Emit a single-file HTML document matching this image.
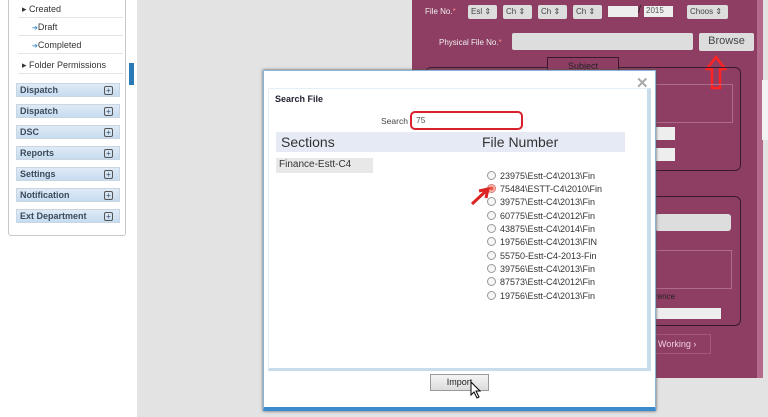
<!DOCTYPE html>
<html><head><style>
*{margin:0;padding:0;box-sizing:border-box}
body{width:768px;height:417px;overflow:hidden;background:#e3e3e3;font-family:"Liberation Sans",sans-serif;position:relative}
.a{position:absolute}
.left{left:0;top:0;width:137px;height:417px;background:#fff}
.side{left:8px;top:-4px;width:118px;height:240px;border:1px solid #c8c8c8;border-radius:3px;background:#fff}
.it{font-size:9px;color:#333;white-space:nowrap}
.hd{left:16px;width:104px;height:14px;background:linear-gradient(#dfeaf6,#c6dcf0);border:1px solid #c9d6e2;font-size:9px;font-weight:bold;color:#3b4b5c;padding:1px 0 0 3px}
.hd i{position:absolute;right:6px;top:2px;width:9px;height:9px;border:1px solid #555;border-radius:2px;font-style:normal;font-size:8px;line-height:7px;text-align:center;font-weight:normal}
.pink{left:412px;top:0;width:346px;height:378px;background:#8f3e63}
.sel{height:14px;background:#ddd;border-radius:2px;font-size:8px;color:#444;padding:2px 3px}
.modal{left:263px;top:70px;width:393px;height:341px;background:#fff;border:1px solid #8cb4d8;border-bottom:4px solid #3a8ccf;box-shadow:0 0 3px #555}
.r{font-size:9px;color:#333;white-space:nowrap;left:487px}
.r b{display:inline-block;width:9px;height:9px;border:1px solid #999;border-radius:50%;margin-right:4px;vertical-align:-1px;background:#f6f6f6}
</style></head><body>
<div class="a left"></div>
<div class="a side"></div>
<div class="a it" style="left:22px;top:4px">▸ Created</div>
<div class="a" style="left:18px;top:17px;width:105px;border-top:1px solid #e4e4e4"></div>
<div class="a it" style="left:32px;top:22px"><span style="color:#38c;font-size:7px">➔</span>Draft</div>
<div class="a" style="left:18px;top:35px;width:105px;border-top:1px solid #e4e4e4"></div>
<div class="a it" style="left:32px;top:40px"><span style="color:#38c;font-size:7px">➔</span>Completed</div>
<div class="a" style="left:18px;top:53px;width:105px;border-top:1px solid #e4e4e4"></div>
<div class="a it" style="left:22px;top:60px">▸ Folder Permissions</div>
<div class="a" style="left:18px;top:73px;width:105px;border-top:1px solid #e4e4e4"></div>
<div class="a" style="left:129px;top:63px;width:5px;height:22px;background:#2a7ab8"></div>
<div class="a hd" style="top:83px">Dispatch<i>+</i></div>
<div class="a hd" style="top:104px">Dispatch<i>+</i></div>
<div class="a hd" style="top:125px">DSC<i>+</i></div>
<div class="a hd" style="top:146px">Reports<i>+</i></div>
<div class="a hd" style="top:167px">Settings<i>+</i></div>
<div class="a hd" style="top:188px">Notification<i>+</i></div>
<div class="a hd" style="top:209px">Ext Department<i>+</i></div>

<div class="a pink"></div>
<div class="a" style="left:757px;top:0;width:6px;height:378px;background:#b36a8b"></div>
<div class="a" style="left:762px;top:80px;width:6px;height:60px;background:#f2f2f2"></div>
<div class="a it" style="left:425px;top:7px;color:#eee;font-size:8px">File No.<span style="color:#f88">*</span></div>
<div class="a sel" style="left:468px;top:5px;width:29px">Esl ⇕</div>
<div class="a sel" style="left:503px;top:5px;width:29px">Ch ⇕</div>
<div class="a sel" style="left:538px;top:5px;width:29px">Ch ⇕</div>
<div class="a sel" style="left:573px;top:5px;width:29px">Ch ⇕</div>
<div class="a" style="left:608px;top:6px;width:30px;height:11px;background:#eee"></div>
<div class="a" style="left:644px;top:6px;width:29px;height:11px;background:#eee;font-size:8px;color:#555;padding-left:2px">2015</div>
<div class="a" style="left:638px;top:4px;color:#222;font-size:11px">/</div>
<div class="a sel" style="left:687px;top:5px;width:41px">Choos ⇕</div>
<div class="a it" style="left:439px;top:38px;color:#eee;font-size:8px">Physical File No.<span style="color:#f88">*</span></div>
<div class="a" style="left:512px;top:33px;width:181px;height:17px;background:#ddd;border-radius:2px"></div>
<div class="a" style="left:699px;top:33px;width:55px;height:18px;background:#ddd;border-radius:2px;font-size:11px;color:#444;text-align:center;padding-top:2px">Browse</div>
<svg class="a" style="left:705px;top:55px" width="22" height="36"><path d="M11 2 L20 14 L15 14 L15 33 L7 33 L7 14 L2 14 Z" fill="none" stroke="#f22" stroke-width="2.5"/></svg>
<div class="a" style="left:425px;top:67px;width:316px;height:104px;border:1px solid #3a1a2a;border-radius:6px"></div>
<div class="a" style="left:547px;top:57px;width:72px;height:16px;border:1px solid #3a1a2a;background:#8f3e63;font-size:9px;color:#222;text-align:center;padding-top:3px">Subject</div>
<div class="a" style="left:650px;top:84px;width:83px;height:39px;border:1px solid #b06a8a"></div>
<div class="a" style="left:655px;top:127px;width:20px;height:13px;background:#eee"></div>
<div class="a" style="left:655px;top:148px;width:20px;height:13px;background:#eee"></div>
<div class="a" style="left:425px;top:196px;width:316px;height:130px;border:1px solid #3a1a2a;border-radius:6px"></div>
<div class="a" style="left:655px;top:214px;width:76px;height:17px;background:#ddd;border-radius:3px"></div>
<div class="a" style="left:650px;top:250px;width:82px;height:39px;border:1px solid #b06a8a"></div>
<div class="a" style="left:655px;top:292px;font-size:8px;color:#222">rence</div>
<div class="a" style="left:655px;top:308px;width:66px;height:11px;background:#eee"></div>
<div class="a" style="left:651px;top:334px;width:60px;height:20px;border:1px solid #a8557b;font-size:9px;color:#f0d0e0;padding:4px 0 0 6px">Working ›</div>

<div class="a modal"></div>
<div class="a" style="left:636px;top:74px;color:#aaa;font-size:15px;font-weight:bold">✕</div>
<div class="a" style="left:268px;top:88px;width:383px;height:283px;border:1px solid #c5daea;border-width:1px 4px 3px 1px;border-color:#e5eef5 #c9dceb #c9dceb #e5eef5"></div>
<div class="a" style="left:275px;top:94px;font-size:9px;font-weight:bold;color:#223">Search File</div>
<div class="a" style="left:381px;top:116px;font-size:8.5px;color:#444">Search</div>
<div class="a" style="left:410px;top:111px;width:113px;height:19px;border:2px solid #d9202c;border-radius:5px;font-size:8.5px;color:#555;padding:2px 0 0 4px">75</div>
<div class="a" style="left:276px;top:132px;width:349px;height:20px;background:#e5eaf5"></div>
<div class="a" style="left:281px;top:134px;font-size:14px;color:#333">Sections</div>
<div class="a" style="left:482px;top:134px;font-size:14px;color:#333">File Number</div>
<div class="a" style="left:276px;top:158px;width:97px;height:15px;background:#e8e8e8;font-size:10px;color:#333;padding:1px 0 0 3px">Finance-Estt-C4</div>
<div class="a r" style="top:171px"><b></b>23975\Estt-C4\2013\Fin</div>
<div class="a r" style="top:184px"><b style="background:radial-gradient(#e54 35%,#f6c0b0 45%);border-color:#d77"></b>75484\ESTT-C4\2010\Fin</div>
<div class="a r" style="top:197px"><b></b>39757\Estt-C4\2013\Fin</div>
<div class="a r" style="top:211px"><b></b>60775\Estt-C4\2012\Fin</div>
<div class="a r" style="top:224px"><b></b>43875\Estt-C4\2014\Fin</div>
<div class="a r" style="top:237px"><b></b>19756\Estt-C4\2013\FIN</div>
<div class="a r" style="top:251px"><b></b>55750-Estt-C4-2013-Fin</div>
<div class="a r" style="top:264px"><b></b>39756\Estt-C4\2013\Fin</div>
<div class="a r" style="top:277px"><b></b>87573\Estt-C4\2012\Fin</div>
<div class="a r" style="top:291px"><b></b>19756\Estt-C4\2013\Fin</div>
<svg class="a" style="left:470px;top:186px" width="22" height="20"><path d="M2 18 L17 4 M9 5 L18 3 L16 12" stroke="#d22" stroke-width="3" fill="none"/></svg>
<div class="a" style="left:430px;top:374px;width:59px;height:17px;border:1px solid #999;background:linear-gradient(#f4f4f4,#dcdcdc);font-size:9px;color:#222;text-align:center;padding-top:2px">Import</div>
<svg class="a" style="left:470px;top:381px" width="12" height="18"><path d="M1 1 L1 14 L4 11 L7 17 L9 16 L6 10 L10 10 Z" fill="#fff" stroke="#000" stroke-width="1"/></svg>
</body></html>
